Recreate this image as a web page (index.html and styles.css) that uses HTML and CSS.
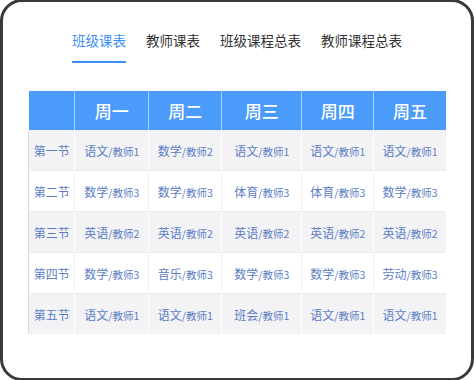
FILE: index.html
```html
<!DOCTYPE html>
<html lang="zh">
<head>
<meta charset="utf-8">
<link rel="stylesheet" href="styles.css">
</head>
<body>
<div class="card">
  <nav class="tabs">
    <span class="tab active">班级课表</span>
    <span class="tab">教师课表</span>
    <span class="tab">班级课程总表</span>
    <span class="tab">教师课程总表</span>
  </nav>
  <table class="schedule">
    <colgroup>
      <col class="c0"><col class="c1"><col class="c2"><col class="c3"><col class="c4"><col class="c5">
    </colgroup>
    <thead>
      <tr><th></th><th>周一</th><th>周二</th><th>周三</th><th>周四</th><th>周五</th></tr>
    </thead>
    <tbody>
      <tr class="alt">
        <td class="lesson">第一节</td>
        <td>语文<span class="t">/教师1</span></td>
        <td>数学<span class="t">/教师2</span></td>
        <td>语文<span class="t">/教师1</span></td>
        <td>语文<span class="t">/教师1</span></td>
        <td>语文<span class="t">/教师1</span></td>
      </tr>
      <tr>
        <td class="lesson">第二节</td>
        <td>数学<span class="t">/教师3</span></td>
        <td>数学<span class="t">/教师3</span></td>
        <td>体育<span class="t">/教师3</span></td>
        <td>体育<span class="t">/教师3</span></td>
        <td>数学<span class="t">/教师3</span></td>
      </tr>
      <tr class="alt">
        <td class="lesson">第三节</td>
        <td>英语<span class="t">/教师2</span></td>
        <td>英语<span class="t">/教师2</span></td>
        <td>英语<span class="t">/教师2</span></td>
        <td>英语<span class="t">/教师2</span></td>
        <td>英语<span class="t">/教师2</span></td>
      </tr>
      <tr>
        <td class="lesson">第四节</td>
        <td>数学<span class="t">/教师3</span></td>
        <td>音乐<span class="t">/教师3</span></td>
        <td>数学<span class="t">/教师3</span></td>
        <td>数学<span class="t">/教师3</span></td>
        <td>劳动<span class="t">/教师3</span></td>
      </tr>
      <tr class="alt">
        <td class="lesson">第五节</td>
        <td>语文<span class="t">/教师1</span></td>
        <td>语文<span class="t">/教师1</span></td>
        <td>班会<span class="t">/教师1</span></td>
        <td>语文<span class="t">/教师1</span></td>
        <td>语文<span class="t">/教师1</span></td>
      </tr>
    </tbody>
  </table>
</div>
</body>
</html>
```

FILE: styles.css
```css
html, body {
  margin: 0;
  padding: 0;
  background: #ffffff;
  overflow: hidden;
}

body {
  width: 474px;
  height: 380px;
  font-family: "Noto Sans CJK SC", "Noto Sans", sans-serif;
}

.card {
  box-sizing: border-box;
  width: 474px;
  height: 382px;
  margin-top: -1px;
  border: 3px solid #3a3a3a;
  border-radius: 22px;
  background: #ffffff;
  display: flex;
  flex-direction: column;
  align-items: center;
  padding-top: 28px;
}

.tabs {
  display: flex;
  gap: 20px;
  align-items: flex-start;
}

.tab {
  font-size: 13.5px;
  line-height: 20px;
  color: #333333;
  padding-bottom: 11px;
  border-bottom: 2px solid transparent;
}

.tab.active {
  color: #3d8ff2;
  border-bottom-color: #3d8ff2;
}

.schedule {
  margin-top: 28px;
  width: 417px;
  border-collapse: collapse;
  table-layout: fixed;
}

.c0 { width: 46px; }
.c1 { width: 74px; }
.c2 { width: 73px; }
.c3 { width: 80px; }
.c4 { width: 72px; }
.c5 { width: 72px; }

.schedule th {
  background: #4b9cfa;
  color: #ffffff;
  font-size: 17px;
  font-weight: 500;
  height: 39px;
  padding: 0;
  border-right: 1px solid #a9cffc;
}

.schedule th:last-child {
  border-right: none;
}

.schedule td {
  height: 40px;
  padding: 0;
  text-align: center;
  color: #5b7dc4;
  font-size: 12px;
  white-space: nowrap;
  background: #ffffff;
  border-right: 1px solid #f1f1f4;
  border-bottom: 1px solid #ebebef;
}

.schedule tr.alt td {
  background: #f3f3f6;
  border-right-color: #ffffff;
}

.schedule td:last-child {
  border-right: none;
}

.schedule td.lesson {
  border-left: 1px solid #d9d9dd;
}

.schedule tbody tr:last-child td {
  border-bottom: none;
}

.t {
  font-size: 10.5px;
}
```
